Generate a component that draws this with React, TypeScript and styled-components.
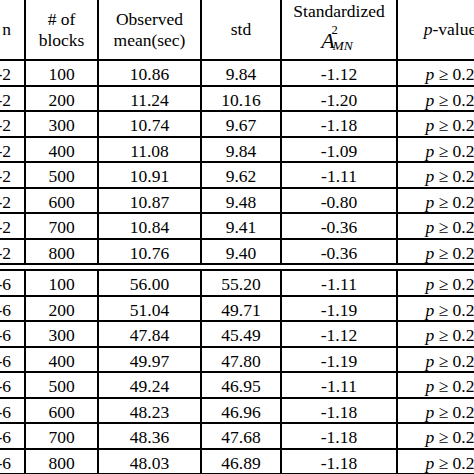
import React from "react";
import styled, { createGlobalStyle } from "styled-components";

const GlobalStyle = createGlobalStyle`
  html, body {
    margin: 0;
    padding: 0;
    background: #ffffff;
    overflow: hidden;
  }
`;

const Viewport = styled.div`
  width: 474px;
  height: 474px;
  overflow: hidden;
  background: #ffffff;
`;

const Table = styled.table`
  border-collapse: collapse;
  table-layout: fixed;
  width: 588px;
  margin-left: -86px;
  margin-top: -2px;
  font-family: "Liberation Serif", "Times New Roman", serif;
  font-size: 17.5px;
  color: #000000;
`;

const HeadRow = styled.tr`
  height: 61px;
`;

const Row = styled.tr`
  height: 25.5px;
`;

const GapRow = styled.tr`
  height: 6px;
  & > td {
    padding: 0;
    border-left: none;
    border-right: none;
    border-top: 2px solid #000000;
    border-bottom: 2px solid #000000;
  }
`;

const Cell = styled.td<{ $lead?: boolean }>`
  border: 2px solid #000000;
  padding: 3px ${(p) => (p.$lead ? "13px" : "0")} 0 0;
  text-align: ${(p) => (p.$lead ? "right" : "center")};
  vertical-align: middle;
  white-space: nowrap;
  overflow: hidden;
  font-family: "Liberation Serif", "Times New Roman", serif;
  font-size: 17.5px;
  font-weight: normal;
  line-height: 18px;
  color: #000000;
`;

const HeadCell = styled(Cell).attrs({ as: "th" })`
  padding-top: 0;
  line-height: 21px;
`;

const Stack = styled.div`
  display: flex;
  flex-direction: column;
  align-items: center;
`;

const MathLine = styled.div`
  display: flex;
  align-items: flex-start;
  height: 36px;
  padding-right: 4px;
`;

const BigA = styled.span`
  font-style: italic;
  font-size: 22px;
  line-height: 22px;
  margin-top: 8px;
`;

const Scripts = styled.span`
  display: flex;
  flex-direction: column;
  align-items: flex-start;
  margin-left: -3px;
`;

const Sup = styled.span`
  font-size: 12.5px;
  line-height: 12.5px;
  margin-top: 2px;
`;

const Sub = styled.span`
  font-style: italic;
  font-size: 13.5px;
  line-height: 13.5px;
  margin-top: 2px;
  padding-left: 1px;
`;

const It = styled.em`
  font-style: italic;
`;

type Rec = [string, number, string, string, string];

const groupA: Rec[] = [
  ["1e-2", 100, "10.86", "9.84", "-1.12"],
  ["1e-2", 200, "11.24", "10.16", "-1.20"],
  ["1e-2", 300, "10.74", "9.67", "-1.18"],
  ["1e-2", 400, "11.08", "9.84", "-1.09"],
  ["1e-2", 500, "10.91", "9.62", "-1.11"],
  ["1e-2", 600, "10.87", "9.48", "-0.80"],
  ["1e-2", 700, "10.84", "9.41", "-0.36"],
  ["1e-2", 800, "10.76", "9.40", "-0.36"],
];

const groupB: Rec[] = [
  ["1e-6", 100, "56.00", "55.20", "-1.11"],
  ["1e-6", 200, "51.04", "49.71", "-1.19"],
  ["1e-6", 300, "47.84", "45.49", "-1.12"],
  ["1e-6", 400, "49.97", "47.80", "-1.19"],
  ["1e-6", 500, "49.24", "46.95", "-1.11"],
  ["1e-6", 600, "48.23", "46.96", "-1.18"],
  ["1e-6", 700, "48.36", "47.68", "-1.18"],
  ["1e-6", 800, "48.03", "46.89", "-1.18"],
];

const DataRow = ({ r }: { r: Rec }) => (
  <Row>
    <Cell $lead>{r[0]}</Cell>
    <Cell>{r[1]}</Cell>
    <Cell>{r[2]}</Cell>
    <Cell>{r[3]}</Cell>
    <Cell>{r[4]}</Cell>
    <Cell>
      <It>p</It> ≥ 0.2
    </Cell>
  </Row>
);

export default function App() {
  return (
    <Viewport>
      <GlobalStyle />
      <Table>
        <colgroup>
          <col style={{ width: 110 }} />
          <col style={{ width: 73 }} />
          <col style={{ width: 103 }} />
          <col style={{ width: 80 }} />
          <col style={{ width: 116 }} />
          <col style={{ width: 106 }} />
        </colgroup>
        <thead>
          <HeadRow>
            <HeadCell $lead>Pattern n</HeadCell>
            <HeadCell>
              # of
              <br />
              blocks
            </HeadCell>
            <HeadCell>
              Observed
              <br />
              mean(sec)
            </HeadCell>
            <HeadCell>std</HeadCell>
            <HeadCell>
              <Stack>
                <span>Standardized</span>
                <MathLine>
                  <BigA>A</BigA>
                  <Scripts>
                    <Sup>2</Sup>
                    <Sub>MN</Sub>
                  </Scripts>
                </MathLine>
              </Stack>
            </HeadCell>
            <HeadCell>
              <It>p</It>-value
            </HeadCell>
          </HeadRow>
        </thead>
        <tbody>
          {groupA.map((r) => (
            <DataRow key={"a" + r[1]} r={r} />
          ))}
          <GapRow>
            <td colSpan={6} />
          </GapRow>
          {groupB.map((r) => (
            <DataRow key={"b" + r[1]} r={r} />
          ))}
        </tbody>
      </Table>
    </Viewport>
  );
}
